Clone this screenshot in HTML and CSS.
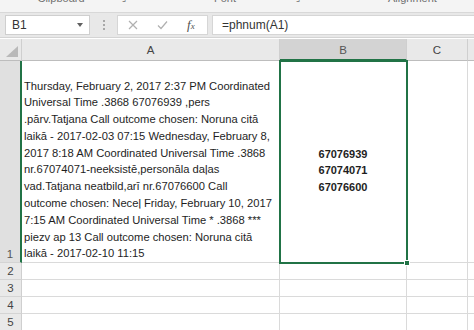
FILE: index.html
```html
<!DOCTYPE html>
<html>
<head>
<meta charset="utf-8">
<link rel="stylesheet" href="styles.css">
</head>
<body>
<div class="app">
  <div class="ribbon">
    <div class="grp grp-clip"><span class="glabel">Clipboard</span><span class="launch">&#8991;</span></div>
    <div class="grp grp-font"><span class="glabel">Font</span><span class="launch">&#8991;</span></div>
    <div class="grp grp-align"><span class="glabel">Alignment</span></div>
  </div>
  <div class="fbar">
    <div class="namebox"><span>B1</span><span class="caret"></span></div>
    <div class="grip"><i></i><i></i><i></i></div>
    <div class="btns">
      <svg class="ico" width="10" height="10" viewBox="0 0 10 10"><path d="M1 1 L9 9 M9 1 L1 9" stroke="#b0b0b0" stroke-width="1.2" fill="none"/></svg>
      <svg class="ico" width="11" height="10" viewBox="0 0 11 10"><path d="M1 5.5 L4 8.5 L10 1.5" stroke="#b0b0b0" stroke-width="1.2" fill="none"/></svg>
      <span class="fx"><i>f</i><span class="fxx">x</span></span>
    </div>
    <div class="finput">=phnum(A1)</div>
  </div>
  <div class="sheet">
    <div class="corner"><svg width="12" height="11" viewBox="0 0 12 11"><polygon points="12,0 12,11 0,11" fill="#b9b9b9"/></svg></div>
    <div class="ch">A</div>
    <div class="ch ch-sel">B</div>
    <div class="ch">C</div>
    <div class="ch ch-last"></div>

    <div class="rh rh-sel">1</div>
    <div class="cell cell-a1">Thursday, February 2, 2017 2:37 PM Coordinated<br>Universal Time .3868 67076939 ,pers<br>.pārv.Tatjana Call outcome chosen: Noruna citā<br>laikā - 2017-02-03 07:15 Wednesday, February 8,<br>2017 8:18 AM Coordinated Universal Time .3868<br>nr.67074071-neeksistē,personāla daļas<br>vad.Tatjana neatbild,arī nr.67076600 Call<br>outcome chosen: Neceļ Friday, February 10, 2017<br>7:15 AM Coordinated Universal Time * .3868 ***<br>piezv ap 13 Call outcome chosen: Noruna citā<br>laikā - 2017-02-10 11:15</div>
    <div class="cell cell-b1"><span>67076939</span><span>67074071</span><span>67076600</span><i class="handle"></i></div>
    <div class="cell"></div>
    <div class="cell cell-last"></div>

    <div class="rh">2</div><div class="cell"></div><div class="cell"></div><div class="cell"></div><div class="cell cell-last"></div>
    <div class="rh">3</div><div class="cell"></div><div class="cell"></div><div class="cell"></div><div class="cell cell-last"></div>
    <div class="rh">4</div><div class="cell"></div><div class="cell"></div><div class="cell"></div><div class="cell cell-last"></div>
    <div class="rh">5</div><div class="cell"></div><div class="cell"></div><div class="cell"></div><div class="cell cell-last"></div>
  </div>
</div>
</body>
</html>
```
FILE: styles.css
```css
* { box-sizing: border-box; }
html, body { margin: 0; padding: 0; }
body {
  width: 474px;
  height: 330px;
  overflow: hidden;
  background: #ffffff;
  font-family: "Liberation Sans", Arial, sans-serif;
}
.app { width: 474px; height: 330px; display: flex; flex-direction: column; }

.ribbon {
  height: 13px;
  flex: none;
  display: flex;
  overflow: hidden;
  background: #f4f4f4;
  border-bottom: 1px solid #d8d8d8;
  color: #707070;
  font-size: 11px;
  line-height: 11px;
}
.grp { display: flex; position: relative; }
.grp-clip { width: 136px; }
.grp-font { width: 172px; }
.grp-align { flex: 1; }
.glabel { flex: 1; text-align: center; margin-top: -7px; }
.grp-clip .glabel { width: 122px; flex: none; }
.grp-font .glabel { padding-left: 18px; }
.grp-align .glabel { text-align: left; padding-left: 80px; }
.launch { width: 12px; margin-top: -7px; font-size: 9px; }

.fbar {
  height: 25px;
  flex: none;
  display: flex;
  align-items: center;
  padding-left: 5px;
  background: #e8e8e8;
  border-bottom: 1px solid #d4d4d4;
}
.namebox {
  width: 85px;
  height: 20px;
  background: #fff;
  border: 1px solid #cfcfcf;
  display: flex;
  align-items: center;
  justify-content: space-between;
  padding: 0 6px;
  font-size: 12px;
  color: #333;
}
.caret {
  width: 0; height: 0;
  border-left: 3.5px solid transparent;
  border-right: 3.5px solid transparent;
  border-top: 4px solid #606060;
}
.grip {
  width: 27px;
  display: flex;
  flex-direction: column;
  align-items: center;
  gap: 2px;
}
.grip i { width: 2px; height: 2px; background: #a8a8a8; display: block; }
.btns {
  width: 91px;
  height: 20px;
  background: #fff;
  border: 1px solid #d6d6d6;
  display: flex;
  align-items: center;
  padding-left: 10px;
  gap: 19px;
}
.fx { font-family: "Liberation Serif", serif; font-size: 13px; color: #505050; }
.fx .fxx { font-size: 9px; font-style: italic; }
.finput {
  margin-left: 4px;
  flex: 1;
  height: 20px;
  background: #fff;
  border: 1px solid #d6d6d6;
  border-right: none;
  font-size: 12px;
  line-height: 18px;
  padding-left: 9px;
  color: #333;
}

.sheet {
  flex: 1;
  display: grid;
  grid-template-columns: 22px 258px 127px 61px 1fr;
  grid-template-rows: 22px 202px 17px 17px 17px 17px;
  margin-top: 1px;
}
.corner {
  background: #e9e9e9;
  border-right: 1px solid #cfcfcf;
  border-bottom: 1px solid #bdbdbd;
  display: flex;
  align-items: flex-end;
  justify-content: flex-end;
  padding: 0 3px 3px 0;
}
.ch {
  background: #e9e9e9;
  border-right: 1px solid #cfcfcf;
  border-bottom: 1px solid #bdbdbd;
  display: flex;
  align-items: center;
  justify-content: center;
  font-size: 11.5px;
  color: #444;
  padding-top: 1px;
}
.ch-sel {
  background: #d3d3d3;
  color: #555;
  border-bottom: 2px solid #217346;
}
.ch-last { border-right: none; }
.rh {
  background: #e9e9e9;
  border-right: 1px solid #cfcfcf;
  border-bottom: 1px solid #d4d4d4;
  display: flex;
  align-items: flex-end;
  justify-content: center;
  font-size: 11.5px;
  color: #444;
  line-height: 16px;
}
.rh-sel {
  background: #e0e0e0;
  border-right: 2px solid #217346;
  color: #555;
}
.cell {
  border-right: 1px solid #dadada;
  border-bottom: 1px solid #dadada;
}
.cell-last { border-right: none; }
.cell-a1 {
  display: block;
  white-space: nowrap;
  overflow: hidden;
  font-size: 11.2px;
  line-height: 16.8px;
  color: #1e1e1e;
  padding-left: 2px;
  padding-top: 16.5px;
}
.cell-b1 {
  position: relative;
  display: flex;
  flex-direction: column;
  justify-content: center;
  align-items: center;
  font-size: 11px;
  font-weight: bold;
  line-height: 16.6px;
  color: #1e1e1e;
  padding-top: 18px;
  outline: 2px solid #217346;
  outline-offset: -1px;
}
.handle {
  position: absolute;
  right: -4px;
  bottom: -4px;
  width: 6px;
  height: 6px;
  background: #217346;
  border: 1px solid #fff;
}
```
